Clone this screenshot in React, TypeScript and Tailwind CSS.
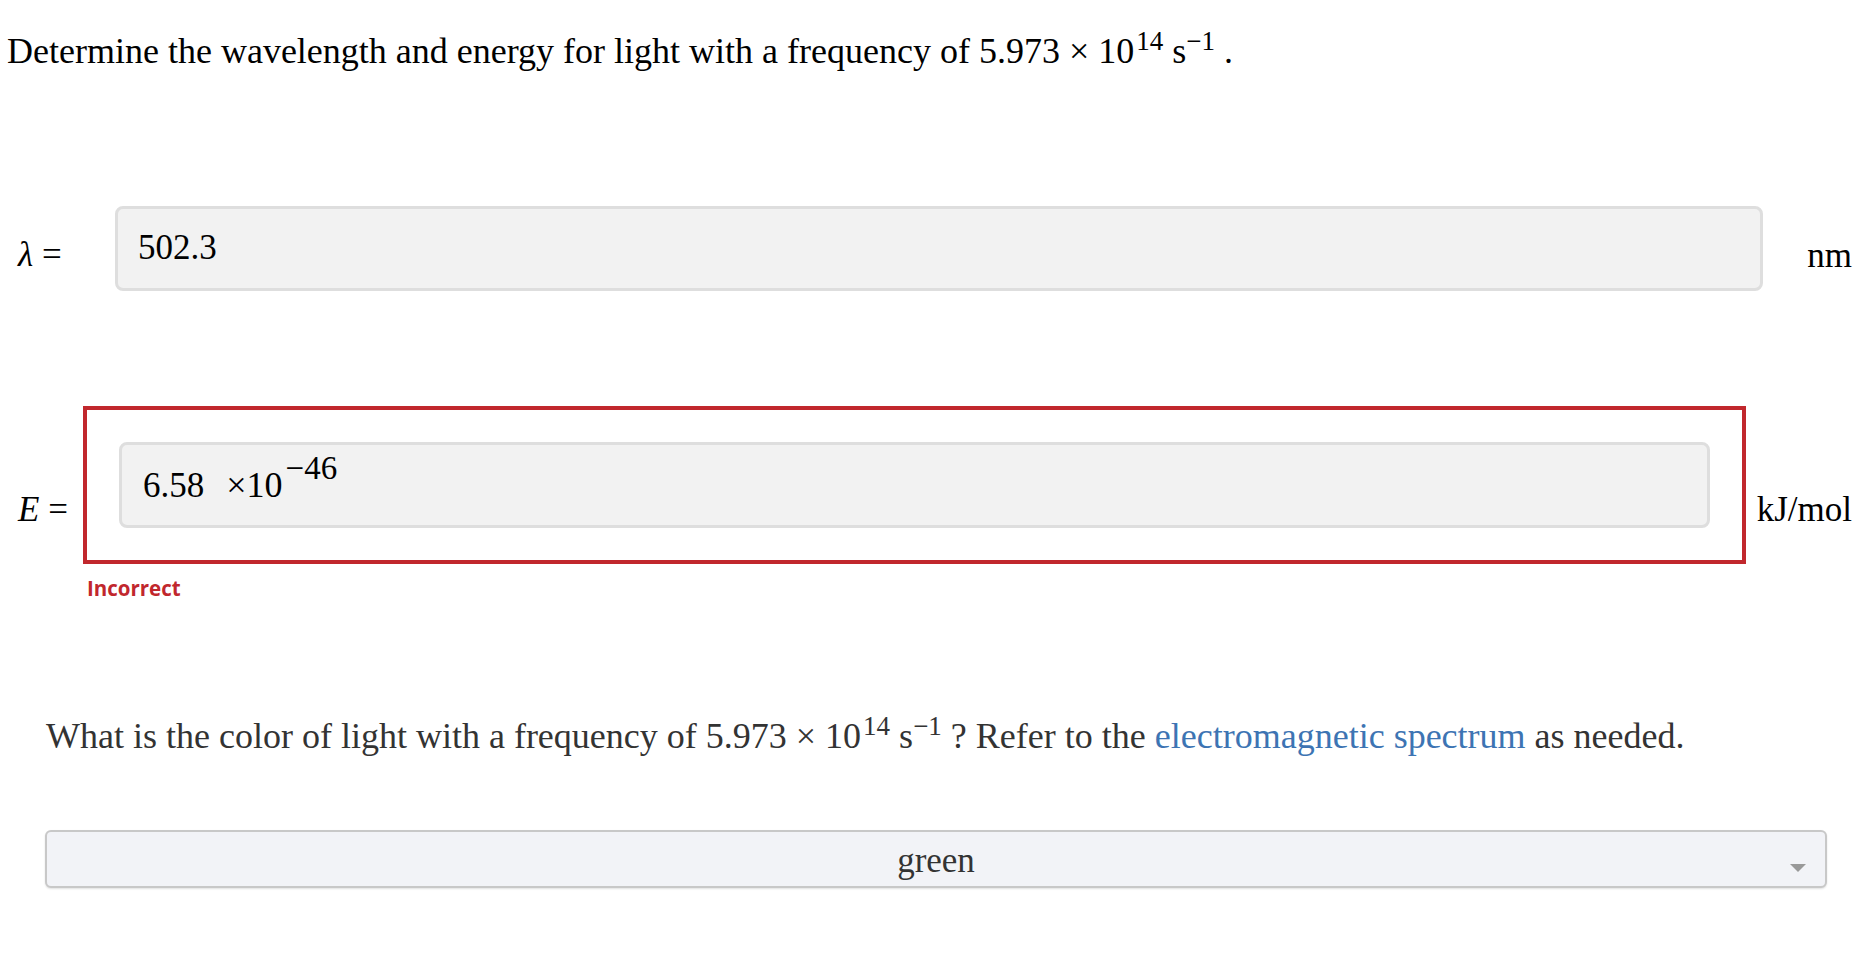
export default function App() {
  return (
    <div className="flex h-[968px] w-[1874px] flex-col bg-white pr-[22px] font-['Liberation_Serif',serif] text-[35px] leading-[35px] text-black">
      {/* prompt */}
      <p className="mt-[34px] pl-[7px] text-[36px]">
        Determine the wavelength and energy for light with a frequency of 5.973 × 10
        <sup className="ml-[2px]">14</sup> s<sup>−1</sup> .
      </p>

      {/* wavelength row */}
      <div className="mt-[137px] flex items-start">
        <div className="mt-[31px] w-[115px] shrink-0 pl-[18px]">
          <span className="italic">λ</span> =
        </div>
        <div className="h-[85px] flex-1 rounded-[8px] border-[3px] border-[#dedede] bg-[#f2f2f2] pl-[20px] pt-[21px]">
          502.3
        </div>
        <div className="mt-[32px] w-[89px] shrink-0 text-right">nm</div>
      </div>

      {/* energy row */}
      <div className="mt-[115px] flex items-start">
        <div className="mt-[86px] w-[83px] shrink-0 pl-[18px]">
          <span className="italic">E</span> =
        </div>
        <div className="flex-1 border-[4px] border-[#c1272d] p-[32px]">
          <div className="h-[86px] rounded-[8px] border-[3px] border-[#dedede] bg-[#f2f2f2] pl-[21px] pt-[23px]">
            6.58
            <span className="ml-[22px] text-[36px]">×10</span>
            <sup className="-top-[18px] ml-[3px] text-[33px]">−46</sup>
          </div>
        </div>
        <div className="mt-[86px] w-[106px] shrink-0 text-right">kJ/mol</div>
      </div>
      <p className="mt-[14px] pl-[87px] font-['Open_Sans',sans-serif] text-[20.5px] font-bold leading-[20px] text-[#c1272d]">
        Incorrect
      </p>

      {/* color question */}
      <p className="mt-[121px] pl-[46px] text-[36px] text-[#333333]">
        What is the color of light with a frequency of 5.973 × 10<sup className="ml-[2px]">14</sup>{' '}
        s<sup>−1</sup> ? Refer to the <span className="text-[#3d74b3]">electromagnetic spectrum</span> as
        needed.
      </p>

      <div className="relative mt-[76px] ml-[45px] mr-[25px] h-[58px] rounded-[6px] border-[2px] border-[#c8c8c8] bg-[#f2f3f7] pt-[11px] text-center text-[#333333] shadow-[0_1px_2px_rgba(0,0,0,0.12)]">
        green
        <span className="absolute right-[19px] top-[32px] h-0 w-0 border-x-[8px] border-t-[8px] border-x-transparent border-t-[#999999]" />
      </div>
    </div>
  );
}
